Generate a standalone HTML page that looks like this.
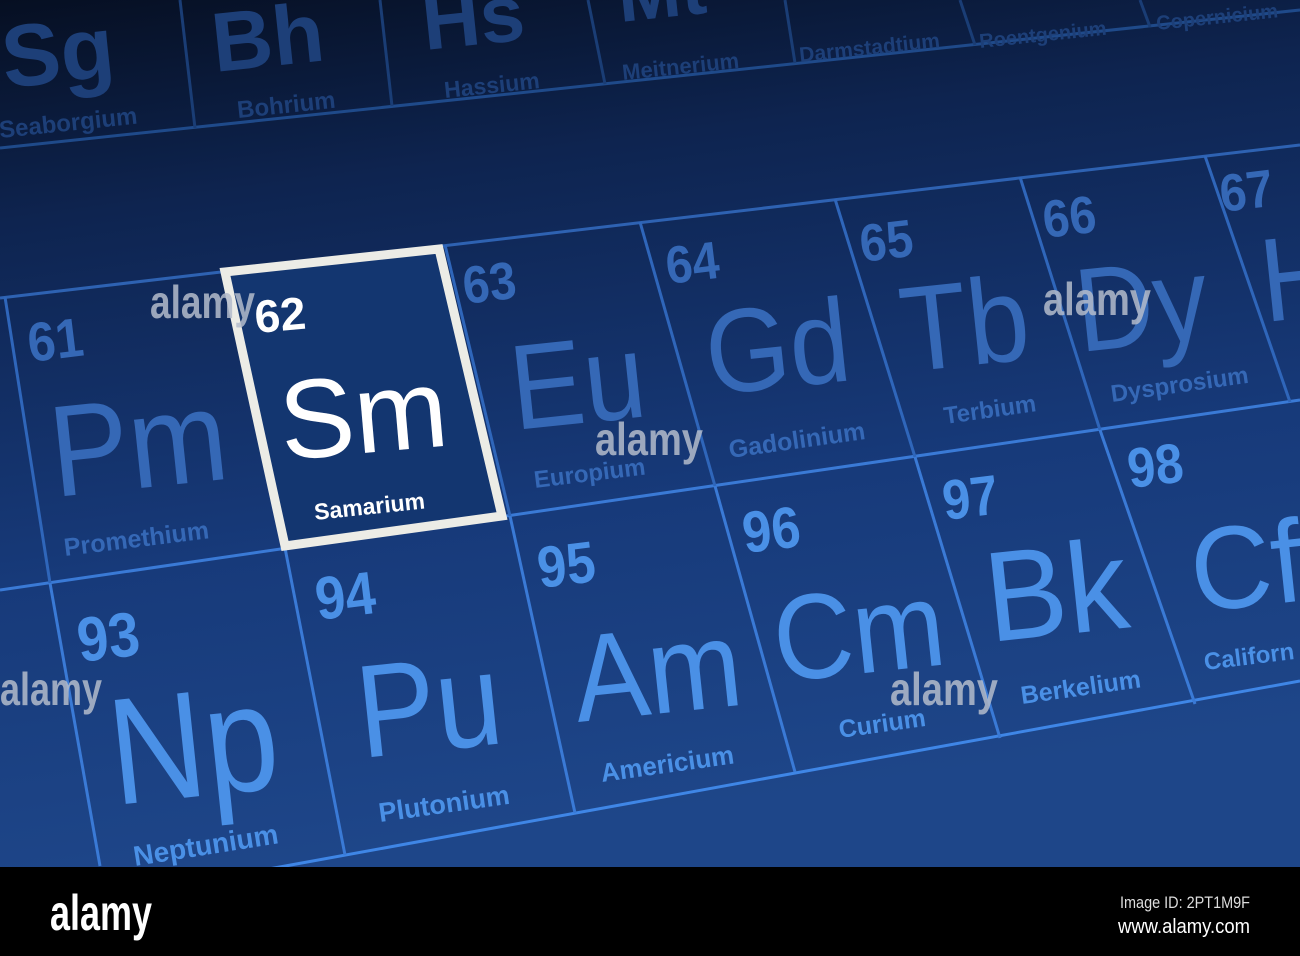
<!DOCTYPE html>
<html><head><meta charset="utf-8"><style>
html,body{margin:0;padding:0;background:#000;}
svg{display:block}
text{font-family:"Liberation Sans",sans-serif;}
</style></head><body>
<svg width="1300" height="956" viewBox="0 0 1300 956" xmlns="http://www.w3.org/2000/svg">
<defs>
<linearGradient id="bg" x1="0" y1="0" x2="0.2" y2="1">
<stop offset="0" stop-color="#060f22"/>
<stop offset="0.25" stop-color="#0e2450"/>
<stop offset="0.65" stop-color="#173a7a"/>
<stop offset="1" stop-color="#1e4689"/>
</linearGradient>
</defs>
<rect width="1300" height="867" fill="url(#bg)"/>
<g stroke-width="3" fill="none">
<line x1="0" y1="148" x2="1300" y2="10" stroke="#1f4a8a"/>
<line x1="0" y1="298" x2="1300" y2="145" stroke="#2e62b2"/>
<line x1="0" y1="590" x2="1300" y2="400" stroke="#3a7ad6"/>
<line x1="0" y1="918" x2="1300" y2="681" stroke="#3f86e6"/>
<line x1="180" y1="0" x2="195" y2="128" stroke="#1a3d75"/>
<line x1="380" y1="0" x2="392" y2="106" stroke="#1a3d75"/>
<line x1="588" y1="0" x2="605" y2="84" stroke="#1a3d75"/>
<line x1="785" y1="0" x2="795" y2="63" stroke="#1a3d75"/>
<line x1="960" y1="0" x2="975" y2="45" stroke="#1a3d75"/>
<line x1="1140" y1="0" x2="1150" y2="27" stroke="#1a3d75"/>
<line x1="5" y1="297" x2="50" y2="583" stroke="#2f66ba"/>
<line x1="445" y1="245" x2="510" y2="516" stroke="#2f66ba"/>
<line x1="640" y1="222" x2="715" y2="486" stroke="#2f66ba"/>
<line x1="835" y1="199" x2="915" y2="457" stroke="#2f66ba"/>
<line x1="1020" y1="177" x2="1100" y2="430" stroke="#2f66ba"/>
<line x1="1205" y1="156" x2="1290" y2="402" stroke="#2f66ba"/>
<line x1="50" y1="583" x2="100" y2="866" stroke="#3a7ad6"/>
<line x1="285" y1="548" x2="345" y2="855" stroke="#3a7ad6"/>
<line x1="510" y1="516" x2="575" y2="813" stroke="#3a7ad6"/>
<line x1="715" y1="486" x2="795" y2="772" stroke="#3a7ad6"/>
<line x1="915" y1="457" x2="1000" y2="738" stroke="#3a7ad6"/>
<line x1="1100" y1="430" x2="1195" y2="704" stroke="#3a7ad6"/>
</g>
<g fill="#1d3f78" font-weight="bold">
<text x="5" y="88" font-size="88" transform="rotate(-6 5 88)">Sg</text>
<text x="0" y="138" font-size="24" transform="rotate(-6 0 138)">Seaborgium</text>
<text x="215" y="72" font-size="84" transform="rotate(-6 215 72)">Bh</text>
<text x="238" y="118" font-size="24" transform="rotate(-6 238 118)">Bohrium</text>
<text x="425" y="50" font-size="80" transform="rotate(-6 425 50)">Hs</text>
<text x="445" y="98" font-size="23" transform="rotate(-6 445 98)">Hassium</text>
<text x="620" y="22" font-size="76" transform="rotate(-6 620 22)">Mt</text>
<text x="623" y="80" font-size="22" transform="rotate(-6 623 80)">Meitnerium</text>
<text x="800" y="62" font-size="21" transform="rotate(-6 800 62)">Darmstadtium</text>
<text x="980" y="48" font-size="20" transform="rotate(-6 980 48)">Roentgenium</text>
<text x="1157" y="30" font-size="20" transform="rotate(-6 1157 30)">Copernicium</text>
</g>
<g fill="#3568b6" font-weight="bold">
<text font-size="50" transform="translate(30 362) rotate(-7) scale(1,1.1)">61</text>
<text font-size="48" transform="translate(465 304) rotate(-7) scale(1,1.1)">63</text>
<text font-size="48" transform="translate(668 284) rotate(-7) scale(1,1.1)">64</text>
<text font-size="48" transform="translate(862 262) rotate(-7) scale(1,1.1)">65</text>
<text font-size="48" transform="translate(1045 238) rotate(-7) scale(1,1.1)">66</text>
<text font-size="48" transform="translate(1222 212) rotate(-7) scale(1,1.1)">67</text>
<text x="65" y="556" font-size="25" transform="rotate(-7 65 556)">Promethium</text>
<text x="535" y="488" font-size="24" transform="rotate(-7 535 488)">Europium</text>
<text x="730" y="458" font-size="25" transform="rotate(-8 730 458)">Gadolinium</text>
<text x="945" y="424" font-size="24" transform="rotate(-8 945 424)">Terbium</text>
<text x="1112" y="402" font-size="24" transform="rotate(-8 1112 402)">Dysprosium</text>
</g>
<g fill="#3568b6">
<text font-size="118" transform="translate(55 497) rotate(-6) scale(1,1.1)">Pm</text>
<text font-size="110" transform="translate(515 430) rotate(-6) scale(1,1.1)">Eu</text>
<text font-size="108" transform="translate(710 395) rotate(-6) scale(1,1.1)">Gd</text>
<text font-size="110" transform="translate(905 372) rotate(-6) scale(1,1.1)">Tb</text>
<text font-size="108" transform="translate(1080 352) rotate(-6) scale(1,1.1)">Dy</text>
<text font-size="108" transform="translate(1265 322) rotate(-6) scale(1,1.1)">H</text>
</g>
<g fill="#4a90e6" font-weight="bold">
<text font-size="56" transform="translate(80 662) rotate(-7) scale(1,1.12)">93</text>
<text font-size="54" transform="translate(318 620) rotate(-7) scale(1,1.12)">94</text>
<text font-size="52" transform="translate(540 588) rotate(-7) scale(1,1.12)">95</text>
<text font-size="52" transform="translate(745 553) rotate(-7) scale(1,1.12)">96</text>
<text font-size="50" transform="translate(945 520) rotate(-7) scale(1,1.12)">97</text>
<text font-size="50" transform="translate(1130 488) rotate(-7) scale(1,1.12)">98</text>
<text x="135" y="866" font-size="28" transform="rotate(-9 135 866)">Neptunium</text>
<text x="380" y="822" font-size="27" transform="rotate(-8 380 822)">Plutonium</text>
<text x="602" y="782" font-size="26" transform="rotate(-8 602 782)">Americium</text>
<text x="840" y="738" font-size="25" transform="rotate(-8 840 738)">Curium</text>
<text x="1022" y="704" font-size="25" transform="rotate(-8 1022 704)">Berkelium</text>
<text x="1205" y="670" font-size="24" transform="rotate(-7 1205 670)">Californ</text>
</g>
<g fill="#4a90e6">
<text font-size="132" transform="translate(115 805) rotate(-6) scale(1,1.15)">Np</text>
<text font-size="118" transform="translate(362 758) rotate(-6) scale(1,1.12)">Pu</text>
<text font-size="112" transform="translate(578 722) rotate(-6) scale(1,1.1)">Am</text>
<text font-size="110" transform="translate(778 682) rotate(-6) scale(1,1.1)">Cm</text>
<text font-size="122" transform="translate(990 642) rotate(-6) scale(1,1.05)">Bk</text>
<text font-size="112" transform="translate(1195 612) rotate(-6) scale(1,1.05)">Cf</text>
</g>
<polygon points="225,272 439,249 502,516 285,546" fill="#133670" stroke="#ecece6" stroke-width="9"/>
<g fill="#ffffff">
<text font-size="46" font-weight="bold" transform="translate(256 333) rotate(-5)">62</text>
<text font-size="112" transform="translate(283 460) rotate(-5)">Sm</text>
<text x="315" y="520" font-size="23" font-weight="bold" transform="rotate(-6 315 520)">Samarium</text>
</g>
<!-- watermarks -->
<g fill="#b4bccb" fill-opacity="0.85" font-weight="bold">
<text x="150" y="318" font-size="46" textLength="105" lengthAdjust="spacingAndGlyphs">alamy</text>
<text x="595" y="455" font-size="46" textLength="108" lengthAdjust="spacingAndGlyphs">alamy</text>
<text x="1043" y="315" font-size="46" textLength="108" lengthAdjust="spacingAndGlyphs">alamy</text>
<text x="0" y="705" font-size="46" textLength="102" lengthAdjust="spacingAndGlyphs">alamy</text>
<text x="890" y="705" font-size="46" textLength="108" lengthAdjust="spacingAndGlyphs">alamy</text>
</g>
<rect x="0" y="867" width="1300" height="89" fill="#000"/>
<text x="50" y="930" font-size="50" font-weight="bold" fill="#fff" textLength="102" lengthAdjust="spacingAndGlyphs">alamy</text>
<text x="1120" y="908" font-size="17" fill="#ddd" textLength="130" lengthAdjust="spacingAndGlyphs">Image ID: 2PT1M9F</text>
<text x="1118" y="933" font-size="20" fill="#fff" textLength="132" lengthAdjust="spacingAndGlyphs">www.alamy.com</text>
</svg>
</body></html>
